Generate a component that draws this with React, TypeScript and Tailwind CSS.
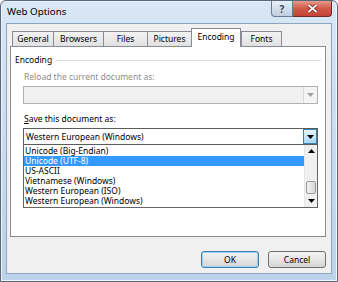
import React from "react";

const tabs = [
  { name: "General", w: 41 },
  { name: "Browsers", w: 50 },
  { name: "Files", w: 44 },
  { name: "Pictures", w: 44 },
  { name: "Encoding", w: 50, active: true },
  { name: "Fonts", w: 41 },
];

const items = [
  "Unicode (Big-Endian)",
  "Unicode (UTF-8)",
  "US-ASCII",
  "Vietnamese (Windows)",
  "Western European (ISO)",
  "Western European (Windows)",
];

const Arrow = ({ color = "#000", up = false }: { color?: string; up?: boolean }) => (
  <svg width="7" height="4" viewBox="0 0 7 4">
    <path d={up ? "M0 4 L7 4 L3.5 0 Z" : "M0 0 L7 0 L3.5 4 Z"} fill={color} />
  </svg>
);

export default function App() {
  return (
    <div className="w-[338px] h-[282px] bg-white font-['Noto_Sans',sans-serif] text-[8.5px] text-black">
      <div className="w-full h-full rounded-t-[6px] border border-[#59677a] bg-gradient-to-b from-[#d9e7f6] via-[#c8dbf0] to-[#bcd2ea] flex flex-col shadow-[inset_0_0_0_1px_#eef4fb]">
        {/* title bar */}
        <div className="h-[22px] flex items-start">
          <div className="pl-[6px] pt-[4px] text-[9.8px] leading-[14px]">Web Options</div>
          <div className="ml-auto mr-[5px] flex">
            <div className="w-[22px] h-[16px] rounded-bl-[4px] border border-t-0 border-[#6b7a90] bg-gradient-to-b from-[#e8eff7] to-[#bfcfe2] flex items-center justify-center text-[10px] font-bold text-[#3a4658] leading-none">
              ?
            </div>
            <div className="w-[39px] h-[16px] rounded-br-[4px] border border-l-0 border-t-0 border-[#6b2b26] bg-gradient-to-b from-[#e69a8c] via-[#d2584a] to-[#c6453a] flex items-center justify-center">
              <svg width="11" height="9" viewBox="0 0 11 9">
                <path d="M1.5 1 L9.5 8 M9.5 1 L1.5 8" stroke="#5a1f1a" strokeWidth="3.2" />
                <path d="M1.5 1 L9.5 8 M9.5 1 L1.5 8" stroke="#fff" strokeWidth="1.8" />
              </svg>
            </div>
          </div>
        </div>

        {/* client area */}
        <div className="mx-[5px] mb-[7px] flex-1 border border-[#8fa4bd] bg-[#f0f0f0] flex flex-col">
          <div className="h-[22px] flex items-end pl-[5px]">
            {tabs.map((t) =>
              t.active ? (
                <div
                  key={t.name}
                  style={{ width: t.w }}
                  className="h-[19px] -mb-px relative z-10 border border-b-0 border-[#898c95] bg-white flex items-start justify-center pt-[2px] leading-[12px]"
                >
                  {t.name}
                </div>
              ) : (
                <div
                  key={t.name}
                  style={{ width: t.w }}
                  className="h-[15px] border border-b-0 border-r-0 last:border-r border-[#898c95] bg-gradient-to-b from-[#f3f3f3] to-[#e1e1e1] flex items-center justify-center leading-[12px]"
                >
                  {t.name}
                </div>
              )
            )}
          </div>

          <div className="ml-[3px] mr-[5px] h-[191px] border border-[#898c95] bg-white flex flex-col">
            <div className="mt-[7px] pl-[4px] pr-[4px] flex items-center h-[12px]">
              <span className="leading-[12px]">Encoding</span>
              <div className="flex-1 ml-[4px] h-px bg-[#d5dfe5]" />
            </div>

            <div className="pl-[13px] mt-[5px] leading-[12px] text-[#8d8d8d]">Reload the current document as:</div>
            <div className="ml-[12px] mt-[3px] w-[295px] h-[18px] border border-[#adb2b5] bg-[#f0f0f0] flex justify-end">
              <div className="w-[14px] h-full border-l border-[#dadada] bg-[#f4f4f4] flex items-center justify-center">
                <Arrow color="#a0a0a0" />
              </div>
            </div>

            <div className="pl-[13px] mt-[9px] leading-[12px]">
              <span className="underline">S</span>ave this document as:
            </div>
            <div className="ml-[12px] mt-[3px] w-[295px] h-[17px] border border-[#5c5c5c] bg-white flex items-center">
              <span className="pl-[2px] flex-1 leading-[12px]">Western European (Windows)</span>
              <div className="w-[14px] h-[15px] border border-[#3c7fb1] bg-gradient-to-b from-[#e5f4fc] to-[#a8d8f5] flex items-center justify-center">
                <Arrow />
              </div>
            </div>
            <div className="ml-[12px] w-[295px] h-[63px] border border-t-0 border-[#646464] bg-white flex">
              <div className="flex-1 flex flex-col pt-px">
                {items.map((it, i) => (
                  <div
                    key={it}
                    className={`h-[10px] pl-[1px] flex items-center leading-[10px] ${
                      i === 1 ? "bg-[#3399ff] text-white" : ""
                    }`}
                  >
                    {it}
                  </div>
                ))}
              </div>
              <div className="w-[13px] bg-[#f0f0f0] border-l border-[#e6e6e6] flex flex-col items-center">
                <div className="h-[12px] flex items-center justify-center">
                  <Arrow up />
                </div>
                <div className="flex-1 w-full px-px pt-[24px]">
                  <div className="h-[13px] w-full rounded-[2px] border border-[#9a9a9a] bg-gradient-to-r from-[#f2f2f2] to-[#d8d8d8]" />
                </div>
                <div className="h-[12px] flex items-center justify-center">
                  <Arrow />
                </div>
              </div>
            </div>
          </div>

          <div className="flex justify-end gap-[9px] mr-[5px] mt-[14px]">
            <div className="w-[58px] h-[17px] rounded-[3px] border border-[#3c7fb1] bg-gradient-to-b from-[#f2f2f2] via-[#e6e6e6] to-[#d4d4d4] shadow-[inset_0_0_0_1px_#9ad1f3] flex items-center justify-center leading-[12px]">
              OK
            </div>
            <div className="w-[58px] h-[17px] rounded-[3px] border border-[#707070] bg-gradient-to-b from-[#f2f2f2] via-[#e6e6e6] to-[#d4d4d4] flex items-center justify-center leading-[12px]">
              Cancel
            </div>
          </div>
        </div>
      </div>
    </div>
  );
}
